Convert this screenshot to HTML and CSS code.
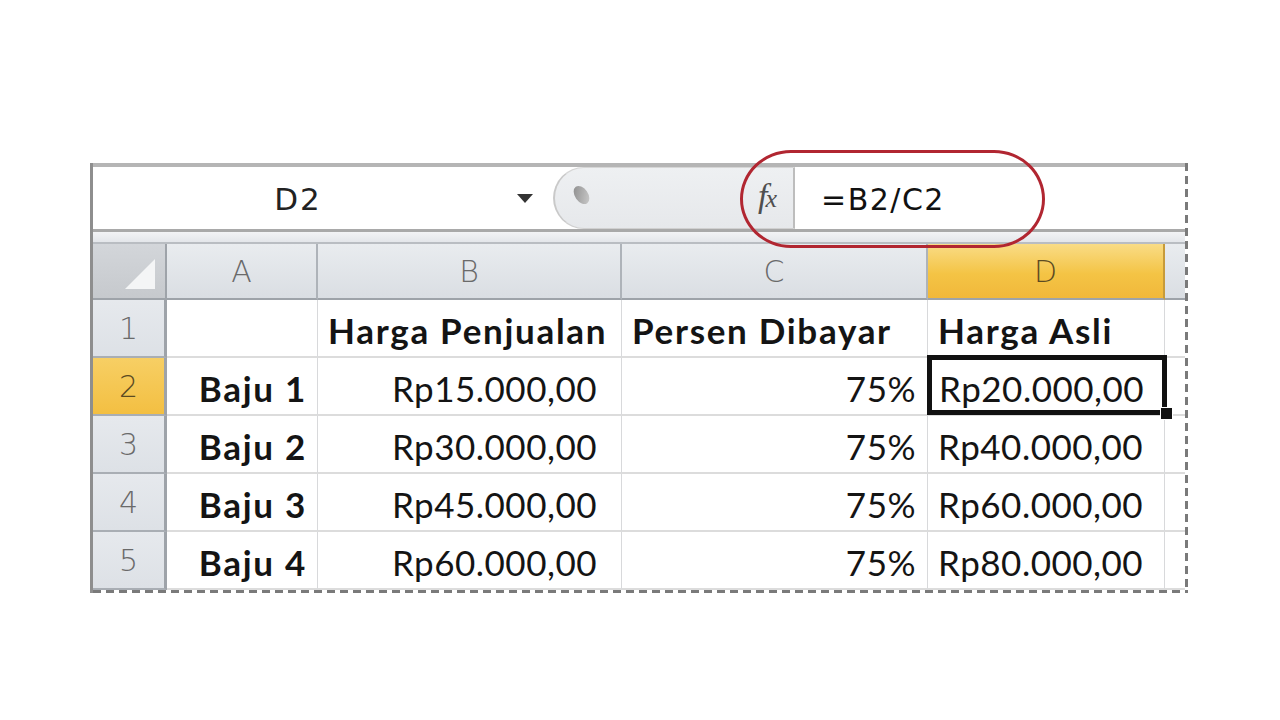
FILE: index.html
```html
<!DOCTYPE html>
<html>
<head>
<meta charset="utf-8">
<link rel="stylesheet" href="styles.css">
</head>
<body>
<div class="sheet">
  <div class="fbar">
    <div class="namebox">
      <span class="name">D2</span>
      <span class="caret"></span>
    </div>
    <div class="mid">
      <span class="grip"></span>
      <span class="fx"><i>f</i><i class="x">x</i></span>
    </div>
    <div class="input">=B2/C2</div>
    <div class="ring"></div>
  </div>
  <div class="strip"></div>
  <div class="grid">
    <div class="corner"><span class="tri"></span></div>
    <div class="ch">A</div>
    <div class="ch">B</div>
    <div class="ch">C</div>
    <div class="ch sel">D</div>
    <div class="ch last"></div>

    <div class="rh">1</div>
    <div class="c"></div>
    <div class="c b">Harga Penjualan</div>
    <div class="c b">Persen Dibayar</div>
    <div class="c b">Harga Asli</div>
    <div class="c e"></div>

    <div class="rh sel">2</div>
    <div class="c b r">Baju 1</div>
    <div class="c r pb">Rp15.000,00</div>
    <div class="c r pc">75%</div>
    <div class="c active">Rp20.000,00<span class="handle"></span></div>
    <div class="c e"></div>

    <div class="rh">3</div>
    <div class="c b r">Baju 2</div>
    <div class="c r pb">Rp30.000,00</div>
    <div class="c r pc">75%</div>
    <div class="c d">Rp40.000,00</div>
    <div class="c e"></div>

    <div class="rh">4</div>
    <div class="c b r">Baju 3</div>
    <div class="c r pb">Rp45.000,00</div>
    <div class="c r pc">75%</div>
    <div class="c d">Rp60.000,00</div>
    <div class="c e"></div>

    <div class="rh">5</div>
    <div class="c b r">Baju 4</div>
    <div class="c r pb">Rp60.000,00</div>
    <div class="c r pc">75%</div>
    <div class="c d">Rp80.000,00</div>
    <div class="c e"></div>
  </div>
</div>
</body>
</html>
```

FILE: styles.css
```css
html, body {
  margin: 0;
  padding: 0;
  background: #ffffff;
}
body {
  padding: 163px 0 0 90px;
  font-family: "Lato", "Liberation Sans", sans-serif;
}
.sheet {
  width: 1098px;
  box-sizing: border-box;
  border-left: 3px solid #8e8e8e;
  padding-right: 3px;
  padding-bottom: 3px;
  background-image:
    repeating-linear-gradient(to bottom, #7a7a7a 0 8px, transparent 8px 13px),
    repeating-linear-gradient(to right, #7a7a7a 0 8px, transparent 8px 13px);
  background-size: 3px 100%, 100% 3px;
  background-position: right top, left bottom;
  background-repeat: no-repeat;
}
.fbar {
  position: relative;
  height: 69px;
  box-sizing: border-box;
  border-top: 4px solid #b5b5b5;
  border-bottom: 3px solid #a9a9a9;
  display: flex;
  background: #fff;
}
.namebox {
  width: 460px;
  display: flex;
  align-items: center;
  background: #fff;
}
.name {
  width: 410px;
  text-align: center;
  font-family: "DejaVu Sans", sans-serif;
  font-size: 31px;
  letter-spacing: 2px;
  color: #222;
  padding-top: 2px;
}
.caret {
  margin-left: 14px;
  width: 0;
  height: 0;
  border-left: 8px solid transparent;
  border-right: 8px solid transparent;
  border-top: 9px solid #333;
}
.mid {
  width: 242px;
  position: relative;
  box-sizing: border-box;
  background: linear-gradient(#eef0f2, #e6e8eb);
  border-left: 2px solid #c9c9c9;
  border-top: 1px solid #d6d6d6;
  border-bottom: 1px solid #d0d0d0;
  border-radius: 34px 0 0 34px;
  border-right: 2px solid #bdbdbd;
  display: flex;
  align-items: center;
  justify-content: flex-end;
}
.grip {
  position: absolute;
  left: 20px;
  top: 17px;
  width: 13px;
  height: 20px;
  border-radius: 50%;
  background: linear-gradient(135deg, #8a8a8a, #cfcfcf);
  transform: rotate(-35deg);
}
.fx {
  font-family: "Liberation Serif", serif;
  color: #4f4f4f;
  margin-right: 16px;
  padding-bottom: 4px;
}
.fx i {
  font-style: italic;
  font-size: 34px;
}
.fx .x {
  font-size: 26px;
  margin-left: -2px;
}
.input {
  flex: 1;
  display: flex;
  align-items: center;
  padding-left: 26px;
  font-family: "DejaVu Sans", sans-serif;
  font-size: 30px;
  letter-spacing: 1.5px;
  color: #111;
  padding-top: 2px;
}
.ring {
  position: absolute;
  left: 647px;
  top: -17px;
  width: 305px;
  height: 98px;
  box-sizing: border-box;
  border: 3px solid #b12631;
  border-radius: 52px / 50px;
}
.strip {
  height: 12px;
  box-sizing: border-box;
  background: linear-gradient(#f2f3f5, #e3e6ea);
  border-bottom: 2px solid #b9bdc2;
}
.grid {
  display: grid;
  grid-template-columns: 74px 151px 304px 306px 237px 1fr;
  grid-template-rows: 56px repeat(5, 58px);
}
.corner {
  position: relative;
  background: linear-gradient(#d3d6da, #c6c9cd);
  border-right: 2px solid #9ea3a9;
  border-bottom: 2px solid #9ea3a9;
}
.tri {
  position: absolute;
  right: 10px;
  bottom: 9px;
  width: 0;
  height: 0;
  border-left: 30px solid transparent;
  border-bottom: 30px solid #f4f5f6;
}
.ch {
  background: linear-gradient(#e9ecef, #dadee3);
  border-right: 2px solid #aeb3b9;
  border-bottom: 2px solid #9ea3a9;
  display: flex;
  align-items: center;
  justify-content: center;
  font-family: "DejaVu Sans", sans-serif;
  font-weight: 200;
  font-size: 30px;
  color: #6a6a6a;
}
.ch.sel {
  background: linear-gradient(#f9dc86, #f4c445 55%, #f1b83a);
  color: #5b4a22;
  border-right-color: #c79b3a;
}
.ch.last {
  border-right: none;
}
.rh {
  background: linear-gradient(#e6e9ed, #dde1e6);
  border-right: 3px solid #9ea3a9;
  border-bottom: 2px solid #a9aeb4;
  display: flex;
  align-items: center;
  justify-content: center;
  font-family: "DejaVu Sans", sans-serif;
  font-weight: 200;
  font-size: 30px;
  color: #6a6a6a;
}
.rh.sel {
  background: linear-gradient(#f7cf64, #f3bf42);
  color: #5b4a22;
}
.c {
  position: relative;
  box-sizing: border-box;
  border-right: 1px solid #d8d9db;
  border-bottom: 2px solid #dcdcdc;
  display: flex;
  align-items: center;
  padding: 3px 10px 0 10px;
  font-size: 35px;
  letter-spacing: 0.5px;
  color: #141414;
  white-space: nowrap;
}
.c.b {
  font-weight: 700;
  letter-spacing: 1.7px;
}
.c.r {
  justify-content: flex-end;
}
.c.pb {
  padding-right: 24px;
}
.c.pc {
  padding-right: 11px;
}
.c.d {
  padding-left: 10px;
}
.c.e {
  border-right: none;
}
.c.active {
  padding-left: 11px;
}
.c.active::before {
  content: "";
  position: absolute;
  left: -1px;
  top: -3px;
  right: -3px;
  bottom: -1px;
  border: 5px solid #111;
}
.handle {
  position: absolute;
  right: -9px;
  bottom: -6px;
  width: 11px;
  height: 11px;
  background: #111;
  border: 1px solid #fff;
  z-index: 2;
}
```
